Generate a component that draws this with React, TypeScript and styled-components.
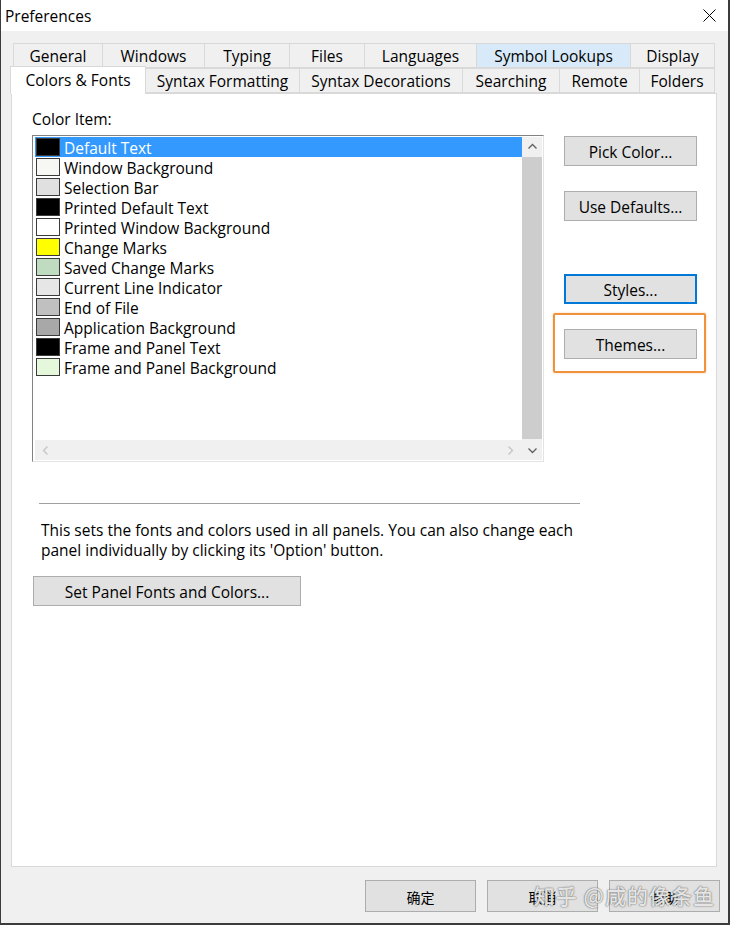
import React from 'react';
import styled, { createGlobalStyle } from 'styled-components';

const GlobalStyle = createGlobalStyle`
  html, body {
    margin: 0;
    padding: 0;
    background: #ffffff;
  }
  * {
    box-sizing: border-box;
  }
`;

const FONT = `"Open Sans", "Noto Sans", "Noto Sans CJK SC", sans-serif`;

const Window = styled.div`
  position: relative;
  width: 730px;
  height: 925px;
  display: flex;
  flex-direction: column;
  border-left: 1px solid #3c3c3c;
  border-right: 2px solid #3c3c3c;
  border-bottom: 2px solid #3c3c3c;
  font-family: ${FONT};
  font-size: 15.5px;
  color: #000;
  background: #f0f0f0;
`;

const TitleBar = styled.div`
  height: 31px;
  background: #ffffff;
  display: flex;
  align-items: center;
  justify-content: space-between;
  padding: 0 12px 0 4px;
`;

const CloseIcon = () => (
  <svg width="13" height="13" viewBox="0 0 13 13">
    <path d="M0.5 0.5 L12.5 12.5 M12.5 0.5 L0.5 12.5" stroke="#000" strokeWidth="1" fill="none" />
  </svg>
);

const Body = styled.div`
  flex: 1;
  display: flex;
  flex-direction: column;
  padding: 12px 11px 0 10px;
`;

const TabRow = styled.div`
  display: flex;
  align-items: flex-end;
  height: 25px;
  padding-left: 2px;
  position: relative;
  z-index: 1;
`;

const Tab = styled.div<{ $w: number; $active?: boolean; $hover?: boolean }>`
  width: ${(p) => p.$w}px;
  height: ${(p) => (p.$active ? 28 : 25)}px;
  margin-left: ${(p) => (p.$active ? -3 : -1)}px;
  margin-bottom: ${(p) => (p.$active ? -1 : 0)}px;
  display: flex;
  align-items: center;
  justify-content: center;
  border: 1px solid #d9d9d9;
  border-bottom: ${(p) => (p.$active ? 'none' : '1px solid #d9d9d9')};
  background: ${(p) => (p.$active ? '#ffffff' : p.$hover ? '#d8eaf9' : '#f0f0f0')};
  padding-bottom: ${(p) => (p.$active ? 2 : 0)}px;
  position: relative;
  z-index: ${(p) => (p.$active ? 2 : 0)};
  white-space: nowrap;
  &:first-child {
    margin-left: ${(p) => (p.$active ? -3 : 0)}px;
  }
`;

const Panel = styled.div`
  flex: 1;
  background: #ffffff;
  border: 1px solid #d9d9d9;
  padding: 14px 0 0 20px;
  display: flex;
  flex-direction: column;
`;

const Label = styled.div`
  line-height: 20px;
  height: 20px;
  padding-top: 1px;
`;

const MainRow = styled.div`
  display: flex;
  margin-top: 7px;
`;

const ListBox = styled.div`
  width: 512px;
  height: 327px;
  border: 1px solid #828282;
  border-right-color: #e3e3e3;
  border-bottom-color: #e3e3e3;
  padding: 1px 1px 1px 2px;
  display: grid;
  grid-template-columns: 1fr 20px;
  grid-template-rows: 1fr 20px;
  background: #fff;
`;

const Items = styled.div`
  overflow: hidden;
`;

const Item = styled.div<{ $selected?: boolean }>`
  height: 20px;
  display: flex;
  align-items: center;
  gap: 4px;
  padding-left: 1px;
  background: ${(p) => (p.$selected ? '#3399ff' : 'transparent')};
  color: ${(p) => (p.$selected ? '#ffffff' : '#000')};
  white-space: nowrap;
`;

const ItemText = styled.span`
  padding-top: 2px;
`;

const Swatch = styled.span<{ $color: string }>`
  width: 24px;
  height: 18px;
  flex: none;
  background: ${(p) => p.$color};
  border: 1px solid #3a3a3a;
`;

const VScroll = styled.div`
  grid-row: 1 / 3;
  grid-column: 2;
  display: flex;
  flex-direction: column;
  background: #f0f0f0;
`;

const ArrowCell = styled.div`
  height: 20px;
  flex: none;
  display: flex;
  align-items: center;
  justify-content: center;
  background: #f0f0f0;
`;

const Thumb = styled.div`
  flex: 1;
  background: #cdcdcd;
  margin: 0 0 1px 0;
`;

const HScroll = styled.div`
  grid-row: 2;
  grid-column: 1;
  background: #f0f0f0;
  display: flex;
  align-items: center;
  justify-content: space-between;
  padding: 0 6px 0 6px;
`;

const Chevron = ({ dir, color }: { dir: 'up' | 'down' | 'left' | 'right'; color: string }) => {
  const d = {
    up: 'M1.5 6.5 L5.5 2.5 L9.5 6.5',
    down: 'M1.5 3.5 L5.5 7.5 L9.5 3.5',
    left: 'M6.5 1.5 L2.5 5.5 L6.5 9.5',
    right: 'M3.5 1.5 L7.5 5.5 L3.5 9.5',
  }[dir];
  return (
    <svg width="11" height="11" viewBox="0 0 11 11">
      <path d={d} stroke={color} strokeWidth="1.3" fill="none" />
    </svg>
  );
};

const SideColumn = styled.div`
  width: 153px;
  margin-left: 9px;
  display: flex;
  flex-direction: column;
`;

const Button = styled.div<{ $w?: number; $h?: number; $focus?: boolean }>`
  width: ${(p) => p.$w ?? 133}px;
  height: ${(p) => p.$h ?? 30}px;
  display: flex;
  align-items: center;
  justify-content: center;
  padding-top: 2px;
  background: #e1e1e1;
  border: ${(p) => (p.$focus ? '2px solid #0078d7' : '1px solid #adadad')};
  white-space: nowrap;
`;

const SideButton = styled(Button)<{ $top: number }>`
  margin-left: 11px;
  margin-top: ${(p) => p.$top}px;
`;

const Highlight = styled.div`
  margin-top: 9px;
  height: 60px;
  border: 2px solid #f0913c;
  border-radius: 2px;
  padding: 14px 0 0 9px;
  box-shadow: 0 0 2px rgba(240, 145, 60, 0.5);
`;

const Separator = styled.div`
  width: 541px;
  margin: 41px 0 0 7px;
  border-top: 1px solid #a0a0a0;
`;

const Description = styled.p`
  margin: 16px 0 0 9px;
  line-height: 20px;
  white-space: nowrap;
`;

const PanelButton = styled(Button)`
  margin: 16px 0 0 1px;
`;

const Footer = styled.div`
  height: 56px;
  display: flex;
  justify-content: flex-end;
  gap: 11px;
  padding: 13px 8px 0 0;
`;

const FooterButton = styled(Button)`
  font-size: 14px;
`;

const Watermark = styled.div`
  position: absolute;
  right: 13px;
  bottom: 13px;
  font-family: "Noto Sans CJK SC", sans-serif;
  font-size: 21px;
  font-weight: 500;
  letter-spacing: 1px;
  color: rgba(255, 255, 255, 0.85);
  text-shadow: 0 0 1px rgba(60, 60, 60, 0.8), 0 0 2px rgba(60, 60, 60, 0.5);
  pointer-events: none;
`;

const backTabs = [
  { label: 'General', w: 90 },
  { label: 'Windows', w: 103 },
  { label: 'Typing', w: 86 },
  { label: 'Files', w: 76 },
  { label: 'Languages', w: 113 },
  { label: 'Symbol Lookups', w: 155, hover: true },
  { label: 'Display', w: 85 },
];

const frontTabs = [
  { label: 'Colors & Fonts', w: 136, active: true },
  { label: 'Syntax Formatting', w: 155 },
  { label: 'Syntax Decorations', w: 164 },
  { label: 'Searching', w: 98 },
  { label: 'Remote', w: 81 },
  { label: 'Folders', w: 76 },
];

const colorItems = [
  { label: 'Default Text', color: '#000000' },
  { label: 'Window Background', color: '#f7f7f3' },
  { label: 'Selection Bar', color: '#e0e0e0' },
  { label: 'Printed Default Text', color: '#000000' },
  { label: 'Printed Window Background', color: '#ffffff' },
  { label: 'Change Marks', color: '#ffff00' },
  { label: 'Saved Change Marks', color: '#c0dcc0' },
  { label: 'Current Line Indicator', color: '#e6e6e6' },
  { label: 'End of File', color: '#c0c0c0' },
  { label: 'Application Background', color: '#a8a8a8' },
  { label: 'Frame and Panel Text', color: '#000000' },
  { label: 'Frame and Panel Background', color: '#e6f8dc' },
];

export default function App() {
  return (
    <>
      <GlobalStyle />
      <Window>
        <TitleBar>
          <span>Preferences</span>
          <CloseIcon />
        </TitleBar>
        <Body>
          <TabRow>
            {backTabs.map((t) => (
              <Tab key={t.label} $w={t.w} $hover={t.hover}>
                {t.label}
              </Tab>
            ))}
          </TabRow>
          <TabRow>
            {frontTabs.map((t) => (
              <Tab key={t.label} $w={t.w} $active={t.active}>
                {t.label}
              </Tab>
            ))}
          </TabRow>
          <Panel>
            <Label>Color Item:</Label>
            <MainRow>
              <ListBox>
                <Items>
                  {colorItems.map((item, i) => (
                    <Item key={item.label} $selected={i === 0}>
                      <Swatch $color={item.color} />
                      <ItemText>{item.label}</ItemText>
                    </Item>
                  ))}
                </Items>
                <VScroll>
                  <ArrowCell>
                    <Chevron dir="up" color="#606060" />
                  </ArrowCell>
                  <Thumb />
                  <ArrowCell>
                    <Chevron dir="down" color="#606060" />
                  </ArrowCell>
                </VScroll>
                <HScroll>
                  <Chevron dir="left" color="#c4c4c4" />
                  <Chevron dir="right" color="#c4c4c4" />
                </HScroll>
              </ListBox>
              <SideColumn>
                <SideButton $top={1}>Pick Color...</SideButton>
                <SideButton $top={25}>Use Defaults...</SideButton>
                <SideButton $top={53} $focus>
                  Styles...
                </SideButton>
                <Highlight>
                  <Button>Themes...</Button>
                </Highlight>
              </SideColumn>
            </MainRow>
            <Separator />
            <Description>
              This sets the fonts and colors used in all panels. You can also change each
              <br />
              panel individually by clicking its 'Option' button.
            </Description>
            <PanelButton $w={268}>Set Panel Fonts and Colors...</PanelButton>
          </Panel>
        </Body>
        <Footer>
          <FooterButton $w={111} $h={32}>确定</FooterButton>
          <FooterButton $w={111} $h={32}>取消</FooterButton>
          <FooterButton $w={111} $h={32}>帮助</FooterButton>
        </Footer>
        <Watermark>知乎 @咸的像条鱼</Watermark>
      </Window>
    </>
  );
}
